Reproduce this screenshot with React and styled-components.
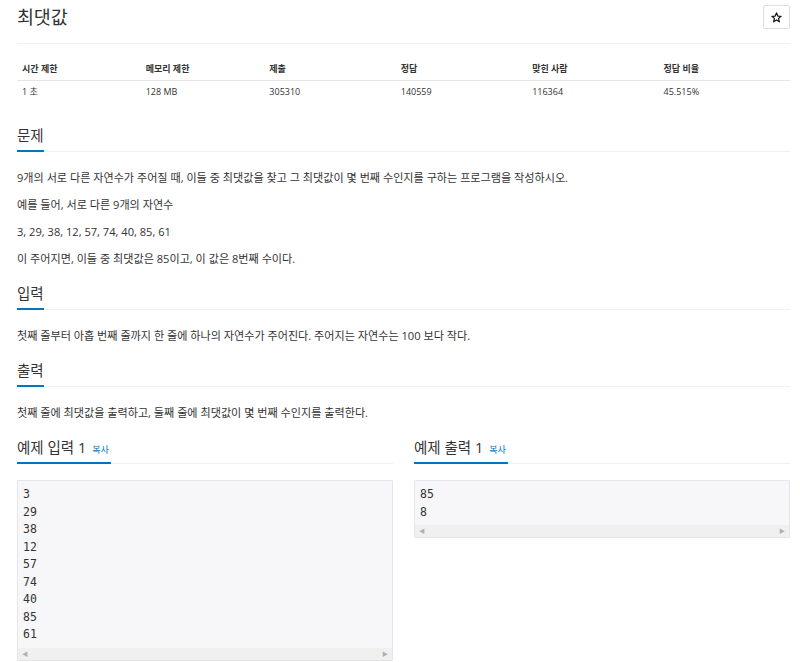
import React from "react";
import styled, { createGlobalStyle } from "styled-components";

const Global = createGlobalStyle`
  html, body { margin: 0; padding: 0; background: #fff; }
  body {
    font-family: "Open Sans", "Noto Sans CJK KR", sans-serif;
    color: #333;
  }
`;

const Page = styled.div`
  padding: 0 10px 0 17px;
  width: 773px;
`;

const TitleBar = styled.div`
  margin-top: 5px;
  height: 24px;
  padding-bottom: 14px;
  border-bottom: 1px solid #eee;
  display: flex;
  align-items: center;
  justify-content: space-between;
`;

const Title = styled.h1`
  margin: 0;
  font-size: 18.5px;
  font-weight: 400;
  line-height: 24px;
  letter-spacing: -0.2px;
  color: #333;
`;

const StarButton = styled.button`
  width: 27px;
  height: 24px;
  padding: 0;
  border: 1px solid #ddd;
  border-radius: 2px;
  background: #fff;
  display: flex;
  align-items: center;
  justify-content: center;
`;

const Table = styled.table`
  width: 100%;
  margin-top: 14px;
  border-collapse: collapse;
  font-size: 9px;
  line-height: 12px;
`;

const Th = styled.th`
  text-align: left;
  font-weight: 700;
  padding: 5px;
  border-bottom: 1px solid #e6e6e6;
  width: ${(p) => p.$w};
`;

const Td = styled.td`
  padding: 5px;
`;

const Section = styled.section`
  margin-top: ${(p) => p.$top || "17px"};
`;

const HeadRow = styled.div`
  display: flex;
  border-bottom: 1px solid #f0f0f0;
`;

const Heading = styled.h2`
  display: block;
  height: 20px;
  margin: 0 0 -1px;
  padding-bottom: 4px;
  border-bottom: 2px solid #0076c0;
  font-size: 14.5px;
  font-weight: 400;
  line-height: 20px;
  color: #333;
  white-space: nowrap;
`;

const CopyLink = styled.span`
  font-size: 9px;
  line-height: 0;
  color: #0076c0;
  margin-left: 6px;
  margin-right: 2px;
`;

const Body = styled.div`
  padding-top: 17px;
  display: flex;
  flex-direction: column;
  gap: 10px;
`;

const P = styled.p`
  margin: 0;
  height: 17px;
  font-size: 11.1px;
  line-height: 17px;
  white-space: nowrap;
`;

const Samples = styled.div`
  display: grid;
  grid-template-columns: 1fr 1fr;
  column-gap: 21px;
  align-items: start;
  margin-top: 17px;
`;

const SampleBody = styled.div`
  padding-top: 16px;
`;

const Pre = styled.div`
  border: 1px solid #e6e6ea;
  background: #f7f7f9;
  border-radius: 1px;
`;

const Code = styled.pre`
  margin: 0;
  padding: 5px 5px 4px;
  font-family: "DejaVu Sans Mono", monospace;
  font-size: 11.5px;
  line-height: 17.5px;
  color: #333;
`;

const Scroll = styled.div`
  height: 12px;
  background: #f0f0f0;
  display: flex;
  align-items: center;
  justify-content: space-between;
  padding: 0 4px;
  color: #b0b0b0;
  font-size: 6px;
  line-height: 12px;
`;

const StarIcon = () => (
  <svg width="11" height="11" viewBox="0 0 24 24" aria-hidden="true">
    <polygon
      points="12,2 14.9,8.9 22,9.3 16.5,14 18.3,21.5 12,17.3 5.7,21.5 7.5,14 2,9.3 9.1,8.9"
      fill="none"
      stroke="#111"
      strokeWidth="2.6"
      strokeLinejoin="round"
    />
  </svg>
);

const Sample = ({ title, lines }) => (
  <div>
    <HeadRow>
      <Heading>
        {title}
        <CopyLink>복사</CopyLink>
      </Heading>
    </HeadRow>
    <SampleBody>
      <Pre>
        <Code>{lines.join("\n")}</Code>
        <Scroll>
          <span>◀</span>
          <span>▶</span>
        </Scroll>
      </Pre>
    </SampleBody>
  </div>
);

const cols = [
  ["시간 제한", "16%", "1 초"],
  ["메모리 제한", "16%", "128 MB"],
  ["제출", "17%", "305310"],
  ["정답", "17%", "140559"],
  ["맞힌 사람", "17%", "116364"],
  ["정답 비율", "17%", "45.515%"],
];

export default function App() {
  return (
    <>
      <Global />
      <Page>
        <TitleBar>
          <Title>최댓값</Title>
          <StarButton aria-label="star">
            <StarIcon />
          </StarButton>
        </TitleBar>
        <Table>
          <thead>
            <tr>
              {cols.map(([h, w]) => (
                <Th key={h} $w={w}>{h}</Th>
              ))}
            </tr>
          </thead>
          <tbody>
            <tr>
              {cols.map(([h, , v]) => (
                <Td key={h}>{v}</Td>
              ))}
            </tr>
          </tbody>
        </Table>

        <Section $top="23px">
          <HeadRow>
            <Heading>문제</Heading>
          </HeadRow>
          <Body>
            <P>9개의 서로 다른 자연수가 주어질 때, 이들 중 최댓값을 찾고 그 최댓값이 몇 번째 수인지를 구하는 프로그램을 작성하시오.</P>
            <P>예를 들어, 서로 다른 9개의 자연수</P>
            <P>3, 29, 38, 12, 57, 74, 40, 85, 61</P>
            <P>이 주어지면, 이들 중 최댓값은 85이고, 이 값은 8번째 수이다.</P>
          </Body>
        </Section>

        <Section>
          <HeadRow>
            <Heading>입력</Heading>
          </HeadRow>
          <Body>
            <P>첫째 줄부터 아홉 번째 줄까지 한 줄에 하나의 자연수가 주어진다. 주어지는 자연수는 100 보다 작다.</P>
          </Body>
        </Section>

        <Section>
          <HeadRow>
            <Heading>출력</Heading>
          </HeadRow>
          <Body>
            <P>첫째 줄에 최댓값을 출력하고, 둘째 줄에 최댓값이 몇 번째 수인지를 출력한다.</P>
          </Body>
        </Section>

        <Samples>
          <Sample title="예제 입력 1" lines={["3", "29", "38", "12", "57", "74", "40", "85", "61"]} />
          <Sample title="예제 출력 1" lines={["85", "8"]} />
        </Samples>
      </Page>
    </>
  );
}
